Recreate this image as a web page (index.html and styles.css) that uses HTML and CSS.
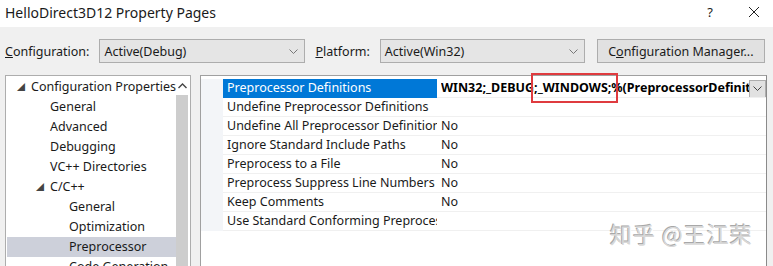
FILE: index.html
```html
<!DOCTYPE html>
<html lang="en">
<head>
  <meta charset="UTF-8">
  <title>HelloDirect3D12 Property Pages</title>
  <link rel="stylesheet" href="styles.css">
</head>
<body>

<div class="titlebar">
  <span class="title">HelloDirect3D12 Property Pages</span>
  <span class="help">?</span>
  <svg class="close" width="12" height="12" viewBox="0 0 12 12"><path d="M1 1L11 11M11 1L1 11" stroke="#222" stroke-width="1"/></svg>
</div>

<div class="toolbar">
  <span class="label"><u>C</u>onfiguration:</span>
  <div class="combo config">
    <span>Active(Debug)</span>
    <svg width="9" height="6" viewBox="0 0 9 6"><path d="M0.5 0.5L4.5 4.5L8.5 0.5" fill="none" stroke="#777"/></svg>
  </div>
  <span class="label"><u>P</u>latform:</span>
  <div class="combo platform">
    <span>Active(Win32)</span>
    <svg width="9" height="6" viewBox="0 0 9 6"><path d="M0.5 0.5L4.5 4.5L8.5 0.5" fill="none" stroke="#777"/></svg>
  </div>
  <div class="button">C<u>o</u>nfiguration Manager...</div>
</div>

<div class="main">
  <div class="tree">
    <ul class="nodes">
      <li class="lvl0"><span class="tri">&#9698;</span>Configuration Properties</li>
      <li class="lvl1">General</li>
      <li class="lvl1">Advanced</li>
      <li class="lvl1">Debugging</li>
      <li class="lvl1">VC++ Directories</li>
      <li class="lvl1b"><span class="tri">&#9698;</span>C/C++</li>
      <li class="lvl2">General</li>
      <li class="lvl2">Optimization</li>
      <li class="lvl2 selected">Preprocessor</li>
      <li class="lvl2">Code Generation</li>
    </ul>
    <div class="scrollbar">
      <div class="arrow">
        <svg width="9" height="6" viewBox="0 0 9 6"><path d="M0.5 5L4.5 1L8.5 5" fill="none" stroke="#444" stroke-width="1.4"/></svg>
      </div>
      <div class="thumb"></div>
    </div>
  </div>

  <div class="props">
    <div class="grid">
      <div class="row active">
        <div class="gutter"></div>
        <div class="name">Preprocessor Definitions</div>
        <div class="value bold">
          <span class="text">WIN32;_DEBUG;_WINDOWS;%(PreprocessorDefinitions)</span>
          <div class="drop">
            <svg width="9" height="6" viewBox="0 0 9 6"><path d="M0.5 0.5L4.5 4.5L8.5 0.5" fill="none" stroke="#444"/></svg>
          </div>
        </div>
      </div>
      <div class="row">
        <div class="gutter"></div>
        <div class="name">Undefine Preprocessor Definitions</div>
        <div class="value"></div>
      </div>
      <div class="row">
        <div class="gutter"></div>
        <div class="name">Undefine All Preprocessor Definitions</div>
        <div class="value">No</div>
      </div>
      <div class="row">
        <div class="gutter"></div>
        <div class="name">Ignore Standard Include Paths</div>
        <div class="value">No</div>
      </div>
      <div class="row">
        <div class="gutter"></div>
        <div class="name">Preprocess to a File</div>
        <div class="value">No</div>
      </div>
      <div class="row">
        <div class="gutter"></div>
        <div class="name">Preprocess Suppress Line Numbers</div>
        <div class="value">No</div>
      </div>
      <div class="row">
        <div class="gutter"></div>
        <div class="name">Keep Comments</div>
        <div class="value">No</div>
      </div>
      <div class="row">
        <div class="gutter"></div>
        <div class="name">Use Standard Conforming Preprocessor</div>
        <div class="value"></div>
      </div>
    </div>
  </div>
</div>

<div class="highlight"></div>
<div class="watermark">知乎 @王江荣</div>

</body>
</html>
```

FILE: styles.css
```css
body {
  margin: 0;
  width: 773px;
  height: 266px;
  overflow: hidden;
  background: #f0f0f0;
  font-family: "Noto Sans", "Noto Sans CJK SC", sans-serif;
  font-size: 12.5px;
  color: #1a1a1a;
  position: relative;
}
.titlebar {
  height: 27px;
  background: #fff;
  display: flex;
  align-items: center;
  padding-left: 5px;
}
.title {
  font-size: 14px;
  flex: 1;
  margin-top: -3px;
}
.help {
  font-size: 13px;
  margin-right: 35px;
  margin-top: -3px;
}
.close {
  margin-right: 13px;
  margin-top: -3px;
}
.toolbar {
  display: flex;
  align-items: center;
  height: 24px;
  padding: 12px 0 0 5px;
}
.label {
  margin-right: 10px;
}
.combo {
  height: 22px;
  border: 1px solid #adadad;
  background: #e5e5e5;
  display: flex;
  align-items: center;
  justify-content: space-between;
  padding: 0 6px 0 4px;
  margin-right: 10px;
}
.combo svg {
  margin-top: 2px;
}
.config {
  width: 194px;
}
.platform {
  width: 193px;
  margin-right: 12px;
}
.button {
  height: 22px;
  width: 166px;
  border: 1px solid #adadad;
  background: #e1e1e1;
  display: flex;
  align-items: center;
  justify-content: center;
}
.main {
  display: flex;
  padding: 12px 0 0 5px;
  gap: 9px;
}
.tree {
  width: 184px;
  height: 200px;
  border: 1px solid #adadad;
  background: #fff;
  display: flex;
}
.nodes {
  list-style: none;
  margin: 1px 0 0 1px;
  padding: 0;
  flex: 1;
}
.nodes li {
  height: 20px;
  line-height: 20px;
  white-space: nowrap;
  overflow: hidden;
}
.tri {
  font-size: 8px;
  display: inline-block;
  width: 14px;
  color: #444;
  vertical-align: 1px;
}
.lvl0 {
  padding-left: 10px;
}
.lvl1 {
  padding-left: 43px;
}
.lvl1b {
  padding-left: 29px;
}
.lvl2 {
  padding-left: 62px;
}
.selected {
  background: #cdd0da;
}
.scrollbar {
  width: 15px;
  margin: 1px 2px 0 0;
  display: flex;
  flex-direction: column;
}
.arrow {
  height: 18px;
  display: flex;
  align-items: center;
  justify-content: center;
}
.thumb {
  flex: 1;
  background: #cdcdcd;
}
.props {
  width: 565px;
  height: 200px;
  border: 1px solid #a0a0a0;
  border-right-color: #8a8a8a;
  background: #fff;
  padding-top: 3px;
}
.row {
  display: flex;
  height: 19px;
  line-height: 18px;
}
.gutter {
  width: 22px;
  background: #f3f5f8;
}
.name {
  width: 210px;
  padding-left: 4px;
  border-bottom: 1px solid #f0f0f0;
  white-space: nowrap;
  overflow: hidden;
}
.value {
  flex: 1;
  padding-left: 4px;
  border-bottom: 1px solid #f0f0f0;
  white-space: nowrap;
  overflow: hidden;
  display: flex;
}
.active .name {
  background: #0078d7;
  color: #fff;
  border-bottom-color: #0078d7;
}
.bold {
  font-weight: bold;
  color: #000;
}
.bold .text {
  flex: 1;
  overflow: hidden;
}
.drop {
  width: 15px;
  height: 16px;
  margin-top: 1px;
  border: 1px solid #adadad;
  background: #e1e1e1;
  display: flex;
  align-items: center;
  justify-content: center;
}
.highlight {
  position: absolute;
  left: 531px;
  top: 73px;
  width: 83px;
  height: 26px;
  border: 2px solid #df3b3f;
}
.watermark {
  position: absolute;
  left: 610px;
  top: 217px;
  font-family: "Noto Sans CJK SC", sans-serif;
  font-size: 22px;
  color: #d8d8d8;
  text-shadow: -1px -1px 0 #a8a8a8, 1px 1px 0 #fff;
  letter-spacing: 1px;
}
```
